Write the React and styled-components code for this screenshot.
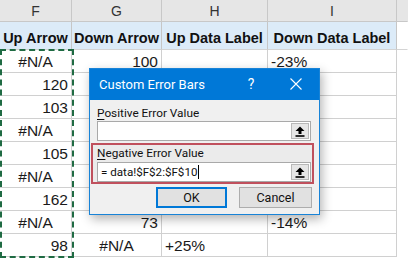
import React from "react";
import styled, { createGlobalStyle } from "styled-components";

const Global = createGlobalStyle`
  body { margin: 0; background: #fff; }
  * { box-sizing: border-box; }
`;

const COLS = [72, 90, 106, 129, 11];
const LETTERS = ["F", "G", "H", "I", ""];
const LABELS = ["Up Arrow", "Down Arrow", "Up Data Label", "Down Data Label", ""];

// [value, align]  c = centred error, r = number, l = text
const ROWS = [
  [["#N/A", "c"], ["100", "r"], ["", "l"], ["-23%", "l"]],
  [["120", "r"], ["", "r"], ["", "l"], ["", "l"]],
  [["103", "r"], ["", "r"], ["", "l"], ["", "l"]],
  [["#N/A", "c"], ["", "r"], ["", "l"], ["", "l"]],
  [["105", "r"], ["", "r"], ["", "l"], ["", "l"]],
  [["#N/A", "c"], ["", "r"], ["", "l"], ["", "l"]],
  [["162", "r"], ["", "r"], ["", "l"], ["", "l"]],
  [["#N/A", "c"], ["73", "r"], ["", "l"], ["-14%", "l"]],
  [["98", "r"], ["#N/A", "c"], ["+25%", "l"], ["", "l"]],
];

const Page = styled.div`
  position: relative;
  width: 408px;
  height: 264px;
  overflow: hidden;
  background: #fff;
`;

const Sheet = styled.div`
  display: grid;
  grid-template-columns: ${COLS.map((c) => c + "px").join(" ")};
  grid-template-rows: 22px 28px repeat(9, 23px);
`;

const Letter = styled.div`
  background: #e6e6e6;
  border-right: 1px solid ${(p) => (p.$last ? "#e6e6e6" : "#c8c8c8")};
  border-bottom: 1px solid #c8c8c8;
  display: flex;
  align-items: center;
  justify-content: center;
  font: 14px "Liberation Sans", Arial, sans-serif;
  color: #333;
`;

const Label = styled.div`
  background: ${(p) => (p.$last ? "#fff" : "#dcebf8")};
  border-right: 1px solid ${(p) => (p.$last ? "#fff" : "#c6c6c6")};
  border-bottom: 1px solid #d4d4d4;
  display: flex;
  align-items: flex-end;
  justify-content: center;
  padding-bottom: 3px;
  font: bold 14.5px "Liberation Sans", Arial, sans-serif;
  color: #111;
  white-space: nowrap;
`;

const Cell = styled.div`
  border-right: 1px solid ${(p) => (p.$last ? "#fff" : "#d0d0d0")};
  border-bottom: 1px solid ${(p) => (p.$last ? "#fff" : "#d0d0d0")};
  display: flex;
  align-items: flex-end;
  justify-content: ${(p) =>
    p.$align === "r" ? "flex-end" : p.$align === "c" ? "center" : "flex-start"};
  padding: 0 3px 1px 3px;
  font: 15.5px "Liberation Sans", Arial, sans-serif;
  color: #1a1a1a;
  white-space: nowrap;
`;

const Marquee = styled.div`
  position: absolute;
  left: 0;
  top: 49px;
  width: 74px;
  height: 209px;
  border: 2px dashed #1f6b43;
  pointer-events: none;
`;

const Dialog = styled.div`
  position: absolute;
  left: 89px;
  top: 68px;
  width: 231px;
  height: 147px;
  background: #f0f0f0;
  border: 1px solid #1883d7;
  box-shadow: 2px 4px 10px rgba(0, 0, 0, 0.3);
  display: flex;
  flex-direction: column;
  font-family: Roboto, "Noto Sans", sans-serif;
`;

const TitleBar = styled.div`
  height: 31px;
  background: #0078d7;
  color: #fff;
  display: flex;
  align-items: center;
  padding: 0 0 1px 9px;
  font-size: 13px;
`;

const Title = styled.span`
  flex: 1;
`;

const TitleBtn = styled.span`
  width: ${(p) => p.$w}px;
  margin-right: ${(p) => p.$mr || 0}px;
  display: flex;
  justify-content: center;
  font-size: 14px;
  line-height: 1;
`;

const Body = styled.div`
  padding: 5px 8px 0 7px;
  display: flex;
  flex-direction: column;
`;

const FieldLabel = styled.div`
  font-size: 11.8px;
  color: #111;
  height: 16px;
  line-height: 16px;
  margin-bottom: ${(p) => p.$mb || 0}px;
  u { text-decoration: underline; text-underline-offset: 2px; }
`;

const Field = styled.div`
  height: 20px;
  background: #fff;
  border: 1px solid #a9a9a9;
  display: flex;
  align-items: center;
  padding: 0 1px 0 3px;
`;

const Value = styled.span`
  flex: 1;
  font-size: 11.6px;
  color: #111;
  display: flex;
  align-items: center;
`;

const Caret = styled.span`
  display: inline-block;
  width: 1px;
  height: 14px;
  background: #000;
  margin-left: 1px;
`;

const RefBtn = styled.div`
  width: 18px;
  height: 16px;
  background: #e6e6e6;
  border: 1px solid #b8b8b8;
  display: flex;
  align-items: center;
  justify-content: center;
`;

const Highlight = styled.div`
  margin: 2px -3px 0 -6px;
  padding: 0 1px 0 4px;
  border: 2px solid #c0505d;
  background: #ebebeb;
`;

const Buttons = styled.div`
  display: flex;
  justify-content: flex-end;
  gap: 12px;
  margin: 3px -1px 0 0;
`;

const Button = styled.div`
  width: ${(p) => p.$w}px;
  height: 21px;
  background: #e1e1e1;
  border: ${(p) => (p.$primary ? "2px solid #0078d7" : "1px solid #adadad")};
  display: flex;
  align-items: center;
  justify-content: center;
  font-size: 12.5px;
  color: #111;
`;

const RefIcon = () => (
  <svg width="10" height="11" viewBox="0 0 10 11">
    <path d="M5 0.5 L9.5 5 L6.5 5 L6.5 8 L3.5 8 L3.5 5 L0.5 5 Z" fill="#000" />
    <rect x="0.5" y="9.2" width="9" height="1.6" fill="#000" />
  </svg>
);

const CloseIcon = () => (
  <svg width="12" height="12" viewBox="0 0 12 12">
    <path d="M0.5 0.5 L11.5 11.5 M11.5 0.5 L0.5 11.5" stroke="#fff" strokeWidth="1.1" />
  </svg>
);

export default function App() {
  return (
    <Page>
      <Global />
      <Sheet>
        {LETTERS.map((l, i) => (
          <Letter key={"h" + i} $last={i === 4}>{l}</Letter>
        ))}
        {LABELS.map((l, i) => (
          <Label key={"l" + i} $last={i === 4}>{l}</Label>
        ))}
        {ROWS.map((row, r) => (
          <React.Fragment key={r}>
            {row.map(([v, a], c) => (
              <Cell key={c} $align={a}>{v}</Cell>
            ))}
            <Cell $last />
          </React.Fragment>
        ))}
      </Sheet>
      <Marquee />
      <Dialog>
        <TitleBar>
          <Title>Custom Error Bars</Title>
          <TitleBtn $w={30} $mr={7}>?</TitleBtn>
          <TitleBtn $w={46}><CloseIcon /></TitleBtn>
        </TitleBar>
        <Body>
          <FieldLabel><u>P</u>ositive Error Value</FieldLabel>
          <Field>
            <Value />
            <RefBtn><RefIcon /></RefBtn>
          </Field>
          <Highlight>
            <FieldLabel $mb={1}><u>N</u>egative Error Value</FieldLabel>
            <Field>
              <Value>= data!$F$2:$F$10<Caret /></Value>
              <RefBtn><RefIcon /></RefBtn>
            </Field>
          </Highlight>
          <Buttons>
            <Button $primary $w={71}>OK</Button>
            <Button $w={73}>Cancel</Button>
          </Buttons>
        </Body>
      </Dialog>
    </Page>
  );
}
